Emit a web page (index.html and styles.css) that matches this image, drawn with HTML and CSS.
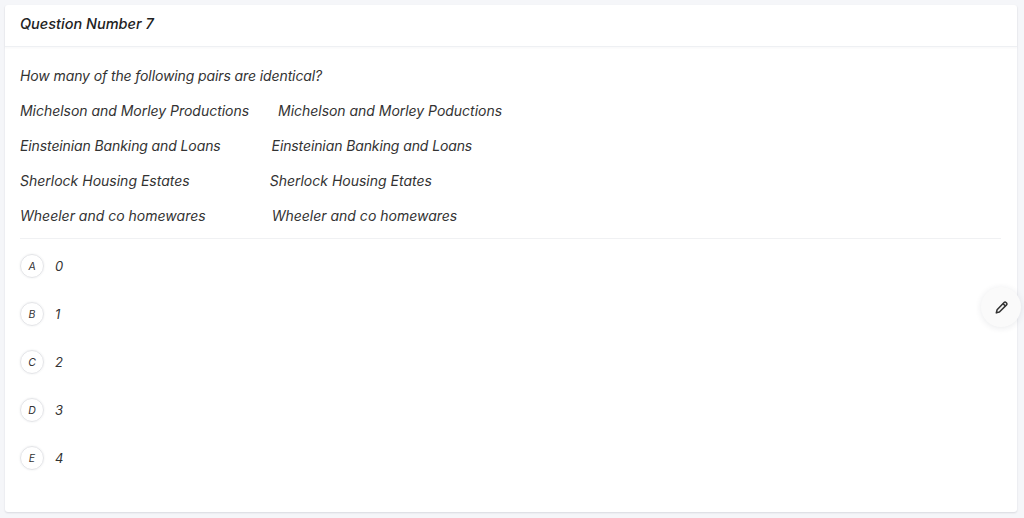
FILE: index.html
```html
<!DOCTYPE html>
<html lang="en">
<head>
  <meta charset="UTF-8">
  <meta name="viewport" content="width=device-width, initial-scale=1.0">
  <title>Question Number 7</title>
  <link rel="stylesheet" href="styles.css">
</head>
<body>
  <div class="card">
    <div class="card-header">
      <h2>Question Number 7</h2>
    </div>
    <div class="card-body">
      <div class="question">
        <p class="tight">How many of the following pairs are identical?</p>
        <p class="slight"><span>Michelson and Morley Productions</span><span class="pair pair-1">Michelson and Morley Poductions</span></p>
        <p class="tight"><span>Einsteinian Banking and Loans</span><span class="pair pair-2">Einsteinian Banking and Loans</span></p>
        <p><span>Sherlock Housing Estates</span><span class="pair pair-3">Sherlock Housing Etates</span></p>
        <p><span>Wheeler and co homewares</span><span class="pair pair-4">Wheeler and co homewares</span></p>
      </div>
      <ul class="options">
        <li><span class="letter">A</span><span>0</span></li>
        <li><span class="letter">B</span><span>1</span></li>
        <li><span class="letter">C</span><span>2</span></li>
        <li><span class="letter">D</span><span>3</span></li>
        <li><span class="letter">E</span><span>4</span></li>
      </ul>
    </div>
  </div>
  <button class="edit-button" aria-label="Edit">
    <svg width="13" height="13" viewBox="0 0 16 16" fill="none" stroke="#333333" stroke-width="1.9" stroke-linejoin="round">
      <path d="M11.2 1.8a1.6 1.6 0 0 1 2.3 0l.7.7a1.6 1.6 0 0 1 0 2.3L5.4 13.6l-3.8 1 1-3.8z"/>
      <path d="M9.8 3.2l3 3"/>
    </svg>
  </button>
</body>
</html>
```

FILE: styles.css
```css
body {
  margin: 0;
  padding: 5px 7px 6px 5px;
  height: 518px;
  box-sizing: border-box;
  overflow: hidden;
  background-color: #f5f6f9;
  color: #333333;
  font-family: Inter, "Liberation Sans", sans-serif;
  font-size: 14px;
  font-style: italic;
}

.card {
  height: 100%;
  background-color: #ffffff;
  border-radius: 3px;
  box-shadow: 0 1px 2px rgba(40, 45, 70, 0.14);
}

.card-header {
  height: 42px;
  box-sizing: border-box;
  padding: 0 15px 4px;
  display: flex;
  align-items: center;
  border-bottom: 1px solid #eef0f3;
  box-shadow: 0 1px 2px rgba(40, 45, 70, 0.04);
}

.card-header h2 {
  margin: 0;
  font-size: 14.5px;
  font-weight: 500;
  color: #222222;
}

.card-body {
  padding: 20px 16px 0 15px;
}

.question {
  padding-bottom: 13px;
  border-bottom: 1px solid #f0f1f3;
}

.question p {
  margin: 0 0 17px;
  line-height: 18px;
  white-space: nowrap;
}

.question p:last-child {
  margin-bottom: 0;
}

.question .tight {
  letter-spacing: -0.11px;
}

.question .slight {
  letter-spacing: -0.03px;
}

.pair {
  display: inline-block;
}

.pair-1 { margin-left: 29px; }
.pair-2 { margin-left: 51px; }
.pair-3 { margin-left: 80px; }
.pair-4 { margin-left: 66px; }

.options {
  list-style: none;
  margin: 15px 0 0;
  padding: 0;
  display: flex;
  flex-direction: column;
  gap: 24px;
}

.options li {
  display: flex;
  align-items: center;
  gap: 11px;
  height: 24px;
  font-size: 13px;
}

.letter {
  width: 24px;
  height: 24px;
  box-sizing: border-box;
  border: 1px solid #e4e5e8;
  border-radius: 50%;
  display: flex;
  align-items: center;
  justify-content: center;
  font-size: 10.5px;
  color: #333333;
  box-shadow: 0 0 2px rgba(40, 45, 70, 0.1);
}

.edit-button {
  position: absolute;
  top: 287px;
  left: 981px;
  width: 40px;
  height: 40px;
  padding: 0;
  border: none;
  border-radius: 50%;
  background-color: #fafafa;
  box-shadow: 0 1px 6px rgba(40, 45, 70, 0.1);
  display: flex;
  align-items: center;
  justify-content: center;
}
```
